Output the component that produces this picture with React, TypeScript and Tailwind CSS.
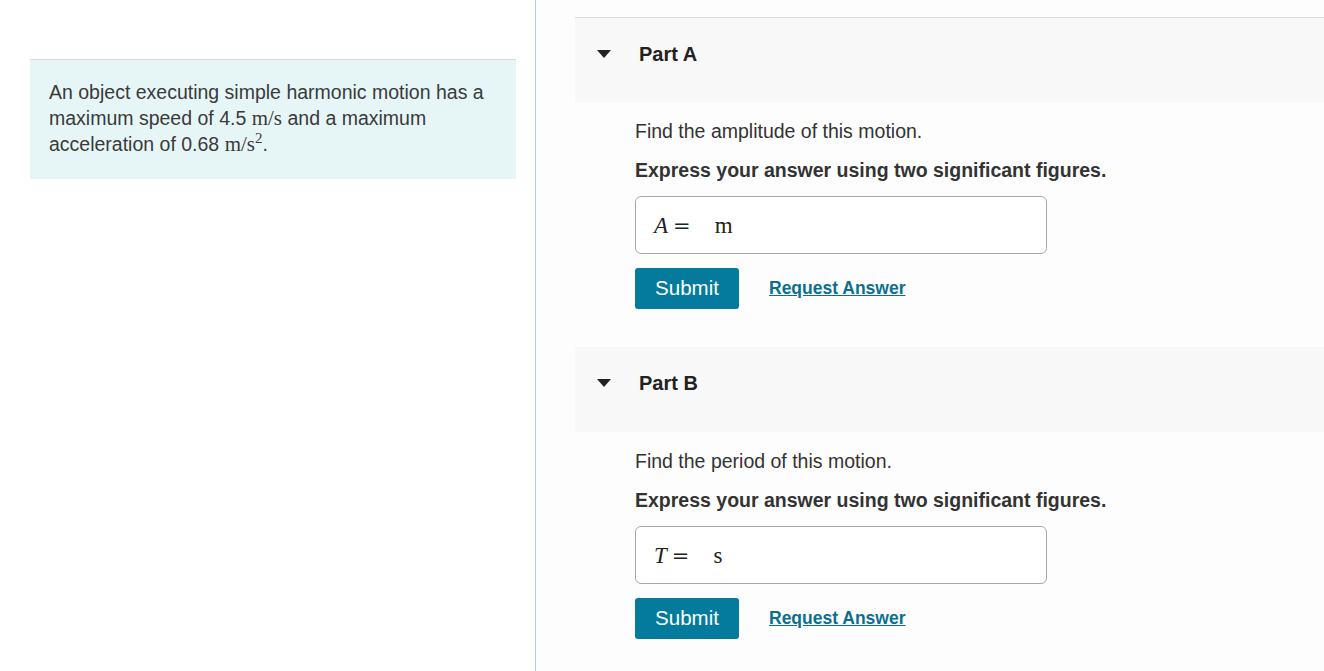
import React from "react";

const sans = { fontFamily: '"Liberation Sans", Arial, sans-serif' };
const serif = { fontFamily: '"Liberation Serif", "DejaVu Serif", serif' };

function Caret() {
    return (
        <svg width="14" height="8" viewBox="0 0 14 8" className="shrink-0">
            <path d="M0 0 L14 0 L7 8 Z" fill="#222" />
        </svg>
    );
}

type PartProps = {
    label: string;
    question: string;
    symbol: string;
    unit: string;
    bordered?: boolean;
};

function Part({ label, question, symbol, unit, bordered }: PartProps) {
    return (
        <div className="flex flex-col">
            {/* header */}
            <div
                className={`flex items-center h-[85px] bg-[#f8f8f8] pl-[22px] pb-[13px] ${bordered ? "border-t border-[#dcdcdc]" : ""}`}
            >
                <Caret />
                <span className="ml-[28px] text-[20px] font-bold text-[#222]">{label}</span>
            </div>

            <div className="ml-[60px] flex flex-col">
                <p className="mt-[18px] text-[19.5px] leading-[22px] text-[#333]">{question}</p>
                <p className="mt-[17px] text-[19.5px] leading-[22px] font-bold text-[#333]">
                    Express your answer using two significant figures.
                </p>

                <div className="mt-[15px] w-[412px] h-[58px] border border-[#a8a8a8] rounded-[6px] bg-white flex items-center pl-[18px]">
                    <span className="text-[23px] leading-none text-[#222] flex items-baseline" style={serif}>
                        <i>{symbol}</i>
                        <span className="ml-[5px] text-[21px]" style={{ fontFamily: '"DejaVu Serif", serif' }}>
                            =
                        </span>
                        <span className="ml-[24px]">{unit}</span>
                    </span>
                </div>

                <div className="mt-[14px] flex items-center">
                    <button className="w-[104px] h-[41px] rounded-[3px] bg-[#047b9c] text-white text-[20.5px]">
                        Submit
                    </button>
                    <a href="#" className="ml-[30px] text-[17.5px] font-bold text-[#0a6f91] underline">
                        Request Answer
                    </a>
                </div>
            </div>
        </div>
    );
}

export default function App() {
    return (
        <div className="flex w-[1324px] h-[671px] overflow-hidden bg-white" style={sans}>
            {/* Problem statement */}
            <div className="w-[536px] shrink-0 border-r border-[#b9c9df] pt-[59px] pl-[30px]">
                <div className="w-[486px] h-[120px] bg-[#e6f6f6] border-t border-[#dadada] pt-[19px] pl-[19px] pr-[18px]">
                    <p className="text-[19.5px] leading-[26px] text-[#3a3a3a]">
                        An object executing simple harmonic motion has a maximum speed of 4.5{" "}
                        <span style={serif} className="text-[21px] leading-none">
                            m/s
                        </span>{" "}
                        and a maximum acceleration of 0.68{" "}
                        <span style={serif} className="text-[21px] leading-none">
                            m/s
                            <span className="relative -top-[8px] text-[15px] leading-none">2</span>
                        </span>
                        .
                    </p>
                </div>
            </div>

            {/* Parts */}
            <div className="flex-1 bg-[#fdfdfd] pl-[39px] pt-[17px] flex flex-col gap-[38px]">
                <Part label="Part A" question="Find the amplitude of this motion." symbol="A" unit="m" bordered />
                <Part label="Part B" question="Find the period of this motion." symbol="T" unit="s" />
            </div>
        </div>
    );
}
